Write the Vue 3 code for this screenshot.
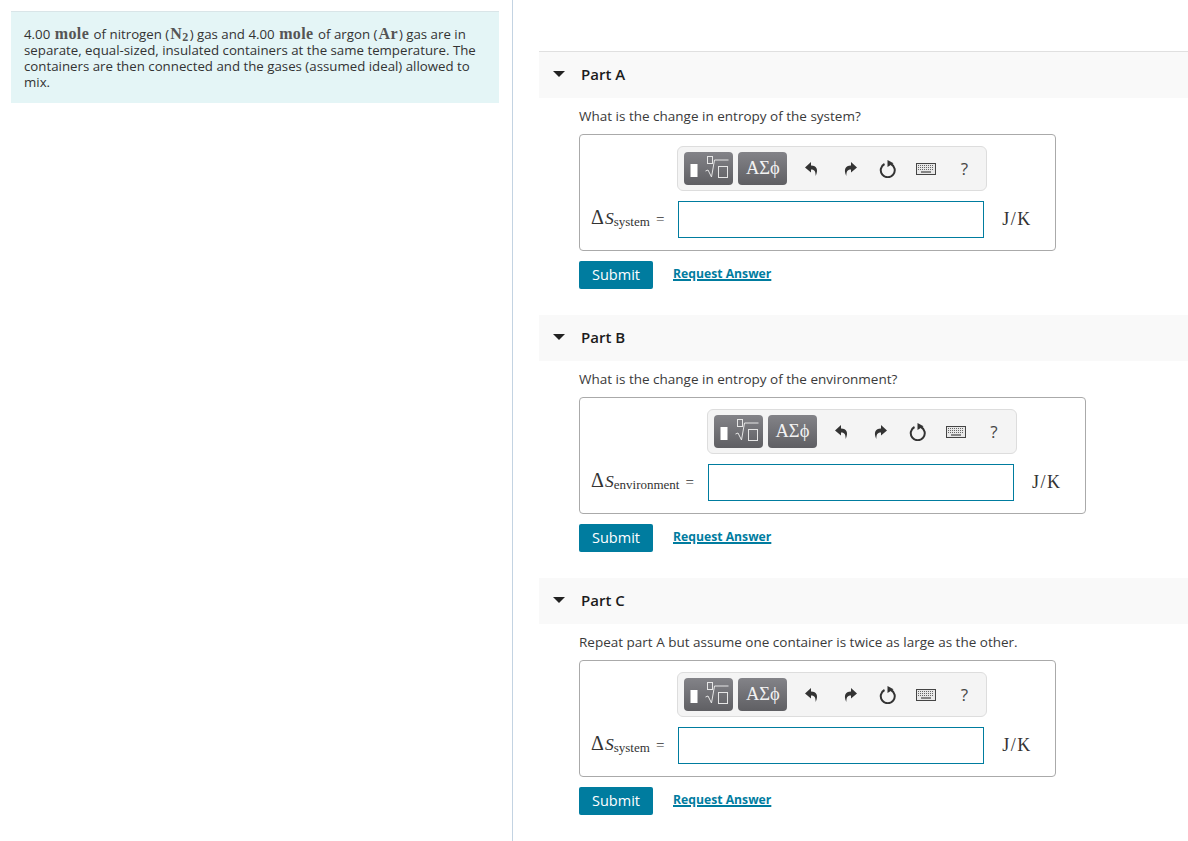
<template>
  <div class="page">
    <aside class="left">
      <div class="callout">
        4.00 <span class="math">mole</span> of nitrogen (<span class="math">N<sub>2</sub></span>) gas and 4.00
        <span class="math">mole</span> of argon (<span class="math">Ar</span>) gas are in separate, equal-sized,
        insulated containers at the same temperature. The containers are then connected and the gases (assumed ideal)
        allowed to mix.
      </div>
    </aside>

    <main class="right">
      <section v-for="part in parts" :key="part.name" class="part">
        <header class="part-head">
          <span class="caret"></span>
          <span class="part-name">{{ part.name }}</span>
        </header>
        <div class="part-body">
          <p class="question">{{ part.question }}</p>
          <div class="answer-box">
            <div class="toolbar">
              <button class="tpl-btn" type="button" aria-label="Templates">
                <svg width="49" height="33" viewBox="0 0 49 33">
                  <rect x="6.500" y="12" width="7" height="13" fill="#fff" />
                  <rect x="23.500" y="4.500" width="5" height="7" fill="none" stroke="#e6e6e6" />
                  <path d="M21.500 19l2.500 -1l3.500 7l3 -17h14" fill="none" stroke="#e6e6e6" />
                  <rect x="34.500" y="14.500" width="9" height="11" fill="none" stroke="#e6e6e6" />
                </svg>
              </button>
              <button class="tpl-btn greek" type="button">ΑΣϕ</button>
              <span class="tool">
                <svg width="16" height="16" viewBox="0 0 16 16">
                  <path d="M7 1L1 6.500 7 11.500V8.500c3 0 4.700 1.200 4.700 6.500C14.500 9 13 4.500 7 4.500z" fill="#333" />
                </svg>
              </span>
              <span class="tool">
                <svg width="16" height="16" viewBox="0 0 16 16">
                  <path d="M9 1l6 5.500-6 5V8.500c-3 0-4.700 1.200-4.700 6.500C1.500 9 3 4.500 9 4.500z" fill="#333" />
                </svg>
              </span>
              <span class="tool">
                <svg width="18" height="18" viewBox="0 0 18 18">
                  <path d="M5.500 4a7 7 0 1 0 6.500 0" fill="none" stroke="#333" stroke-width="2" />
                  <path d="M8.500 0l6 3.200-6 3.800z" fill="#333" />
                </svg>
              </span>
              <span class="tool">
                <svg width="20" height="12" viewBox="0 0 20 12">
                  <rect x="0.500" y="0.500" width="19" height="11" fill="#e8e8e8" stroke="#444" />
                  <path d="M2 2.500h16M2 4.500h16M2 6.500h16" stroke="#666" stroke-dasharray="1 1" />
                  <path d="M5 9h10" stroke="#666" stroke-width="1.500" />
                </svg>
              </span>
              <span class="tool help">?</span>
            </div>
            <div class="label">
              <span class="delta">Δ</span><i>S</i><sub>{{ part.sub }}</sub><span class="eq">=</span>
            </div>
            <input class="answer-input" type="text" />
            <div class="unit">J/K</div>
          </div>
          <div class="actions">
            <button class="submit" type="button">Submit</button>
            <a class="request" href="#">Request Answer</a>
          </div>
        </div>
      </section>
    </main>
  </div>
</template>

<script setup>
const parts = [
  { name: 'Part A', question: 'What is the change in entropy of the system?', sub: 'system' },
  { name: 'Part B', question: 'What is the change in entropy of the environment?', sub: 'environment' },
  { name: 'Part C', question: 'Repeat part A but assume one container is twice as large as the other.', sub: 'system' }
];
</script>

<style>
html,
body {
  margin: 0;
  background: #fff;
}
</style>

<style scoped>
.page {
  display: flex;
  height: 841px;
  overflow: hidden;
  font-family: 'Open Sans', 'Liberation Sans', sans-serif;
  font-size: 13.500px;
  color: #333;
}

.left {
  box-sizing: border-box;
  width: 513px;
  flex: none;
  padding: 11px 13px 0 11px;
  border-right: 1px solid #c3d3e2;
}

.callout {
  box-sizing: border-box;
  height: 92px;
  padding: 14px 13px 0;
  background: #e4f5f6;
  border-top: 1px solid #d9e5e8;
  font-size: 13.270px;
  line-height: 16px;
}

.math {
  margin: 0 1px;
  font-family: 'Liberation Serif', serif;
  font-size: 16px;
  font-weight: 700;
  letter-spacing: 0.400px;
  line-height: 0;
  color: #555;
}

.math sub {
  font-size: 12px;
  line-height: 0;
  vertical-align: -2px;
}

.right {
  flex: 1;
  min-width: 0;
  padding: 52px 0 0 26px;
}

.part {
  height: 263px;
}

.part:first-child {
  margin-top: -1px;
  border-top: 1px solid #e0e0e0;
}

.part-head {
  box-sizing: border-box;
  display: flex;
  align-items: center;
  height: 46px;
  padding: 0 0 2px 14px;
  background: #f9f9f9;
}

.caret {
  width: 0;
  height: 0;
  margin-right: 16px;
  border-left: 6px solid transparent;
  border-right: 6px solid transparent;
  border-top: 6px solid #222;
}

.part-name {
  font-size: 15px;
  font-weight: 600;
  color: #1c1c1c;
}

.part-body {
  padding-left: 40px;
}

.question {
  margin: 0;
  padding-top: 9px;
  height: 27px;
  line-height: 18px;
  color: #3a3a3a;
}

.answer-box {
  box-sizing: border-box;
  display: inline-grid;
  grid-template-columns: auto 306px 30px;
  grid-template-rows: 45px 37px;
  column-gap: 18px;
  row-gap: 10px;
  align-items: center;
  height: 117px;
  padding: 11px 23px 0 11px;
  border: 1px solid #aaa;
  border-radius: 4px;
  vertical-align: top;
}

.toolbar {
  grid-column: 2 / 4;
  grid-row: 1;
  box-sizing: border-box;
  display: flex;
  align-items: center;
  width: 310px;
  height: 45px;
  margin-left: -1px;
  padding-left: 6px;
  background: #f4f4f4;
  border: 1px solid #ddd;
  border-radius: 6px;
}

.tpl-btn {
  width: 49px;
  height: 33px;
  margin-right: 5px;
  padding: 0;
  border: none;
  border-radius: 4px;
  background: linear-gradient(#838388, #5f5f63);
  color: #f2f2f2;
  display: flex;
  align-items: center;
  justify-content: center;
}

.greek {
  margin-right: 6px;
  font-family: 'Liberation Serif', serif;
  font-size: 18.500px;
}

.tool {
  width: 38px;
  display: flex;
  align-items: center;
  justify-content: center;
}

.help {
  font-size: 17px;
  color: #444;
}

.label {
  grid-column: 1;
  grid-row: 2;
  margin: -2px -4px 0 0;
  font-family: 'Liberation Serif', serif;
  font-size: 16px;
  line-height: 20px;
  white-space: nowrap;
  color: #333;
}

.label i {
  font-size: 17.500px;
}

.label sub {
  font-size: 13px;
  line-height: 0;
  vertical-align: -2px;
}

.delta {
  display: inline-block;
  width: 14px;
  font-size: 20px;
  line-height: 0;
}

.eq {
  margin-left: 6px;
  font-size: 15px;
}

.answer-input {
  grid-column: 2;
  grid-row: 2;
  box-sizing: border-box;
  width: 306px;
  height: 37px;
  border: 1px solid #007c9f;
  background: #fff;
  outline: none;
}

.unit {
  grid-column: 3;
  grid-row: 2;
  margin-top: -1px;
  font-family: 'Liberation Serif', serif;
  font-size: 18px;
  letter-spacing: 1.500px;
  white-space: nowrap;
  color: #333;
}

.actions {
  display: flex;
  align-items: center;
  gap: 20px;
  margin-top: 10px;
}

.submit {
  width: 74px;
  height: 28px;
  padding: 0 0 2px;
  border: none;
  border-radius: 2px;
  background: #007c9f;
  color: #fff;
  font-family: inherit;
  font-size: 14.500px;
}

.request {
  margin-top: -3px;
  font-size: 12.200px;
  font-weight: 700;
  color: #007c9f;
  text-decoration: underline;
  text-decoration-thickness: 1.500px;
}
</style>
